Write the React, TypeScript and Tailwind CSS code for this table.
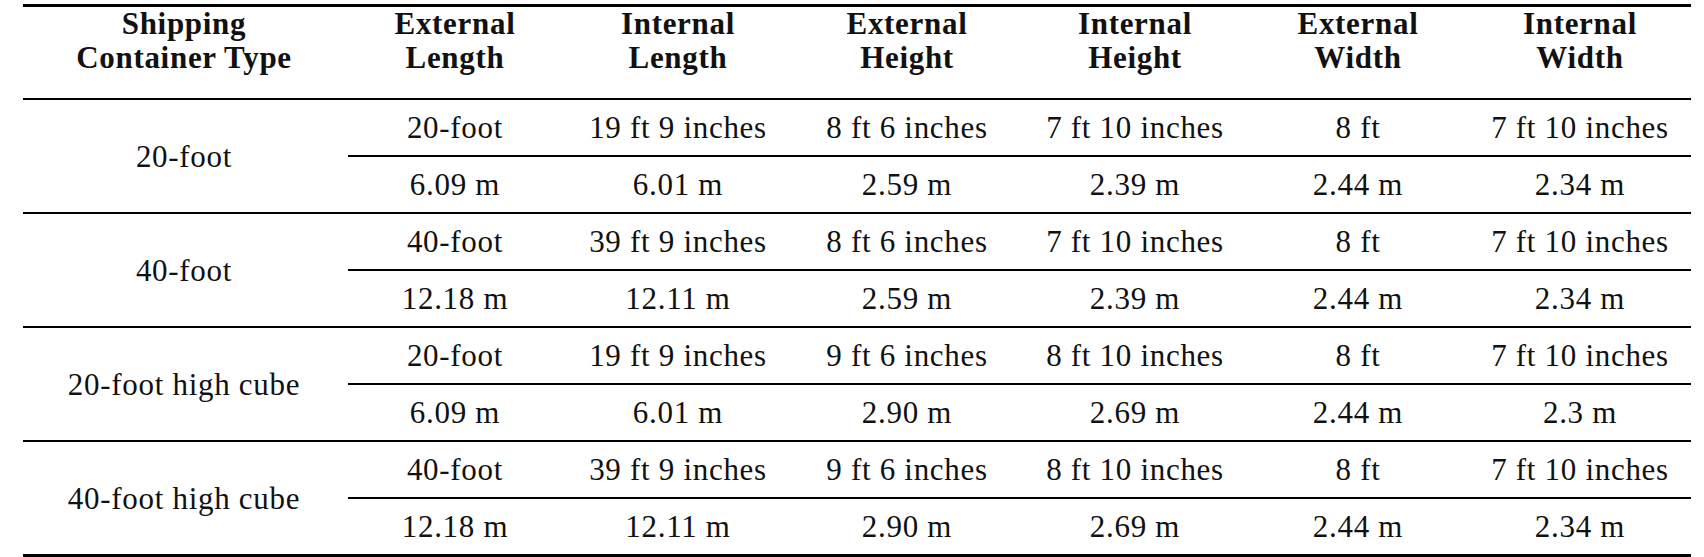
const headers = [
  ['Shipping', 'Container Type'],
  ['External', 'Length'],
  ['Internal', 'Length'],
  ['External', 'Height'],
  ['Internal', 'Height'],
  ['External', 'Width'],
  ['Internal', 'Width'],
];

interface Group {
  type: string;
  rows: [string[], string[]];
}

const groups: Group[] = [
  {
    type: '20-foot',
    rows: [
      ['20-foot', '19 ft 9 inches', '8 ft 6 inches', '7 ft 10 inches', '8 ft', '7 ft 10 inches'],
      ['6.09 m', '6.01 m', '2.59 m', '2.39 m', '2.44 m', '2.34 m'],
    ],
  },
  {
    type: '40-foot',
    rows: [
      ['40-foot', '39 ft 9 inches', '8 ft 6 inches', '7 ft 10 inches', '8 ft', '7 ft 10 inches'],
      ['12.18 m', '12.11 m', '2.59 m', '2.39 m', '2.44 m', '2.34 m'],
    ],
  },
  {
    type: '20-foot high cube',
    rows: [
      ['20-foot', '19 ft 9 inches', '9 ft 6 inches', '8 ft 10 inches', '8 ft', '7 ft 10 inches'],
      ['6.09 m', '6.01 m', '2.90 m', '2.69 m', '2.44 m', '2.3 m'],
    ],
  },
  {
    type: '40-foot high cube',
    rows: [
      ['40-foot', '39 ft 9 inches', '9 ft 6 inches', '8 ft 10 inches', '8 ft', '7 ft 10 inches'],
      ['12.18 m', '12.11 m', '2.90 m', '2.69 m', '2.44 m', '2.34 m'],
    ],
  },
];

// widths of the six measurement columns (first column is 322px)
const dataCols = 'grid-cols-[220px_226px_232px_224px_222px_222px]';

function ValueRow({ values }: { values: string[] }) {
  return (
    <div className={`grid ${dataCols} h-[55px] items-center`}>
      {values.map((v, i) => (
        <div key={i} className="text-center whitespace-nowrap">
          {v}
        </div>
      ))}
    </div>
  );
}

export default function App() {
  return (
    <div
      className="w-[1704px] h-[557px] bg-white pt-[4px] pl-[23px] text-[31px] leading-none tracking-[0.7px] text-[#111]"
      style={{ fontFamily: '"Liberation Serif", "Times New Roman", serif' }}
    >
      <div className="w-[1668px] border-t-[3px] border-b-[3px] border-black">
        {/* Header */}
        <div className="grid grid-cols-[322px_220px_226px_232px_224px_222px_222px] h-[93px] border-b-2 border-black font-bold leading-[34px]">
          {headers.map(([a, b], i) => (
            <div key={i} className="flex flex-col items-center justify-center pb-[27px]">
              <span>{a}</span>
              <span>{b}</span>
            </div>
          ))}
        </div>

        {/* Body */}
        {groups.map((g, gi) => (
          <div
            key={g.type}
            className={`flex ${gi < groups.length - 1 ? 'border-b-2 border-black' : ''}`}
          >
            <div className="w-[322px] flex items-center justify-center">{g.type}</div>
            <div className="flex-1 flex flex-col">
              <ValueRow values={g.rows[0]} />
              <div className="ml-[3px] h-[2px] bg-black" />
              <ValueRow values={g.rows[1]} />
            </div>
          </div>
        ))}
      </div>
    </div>
  );
}
